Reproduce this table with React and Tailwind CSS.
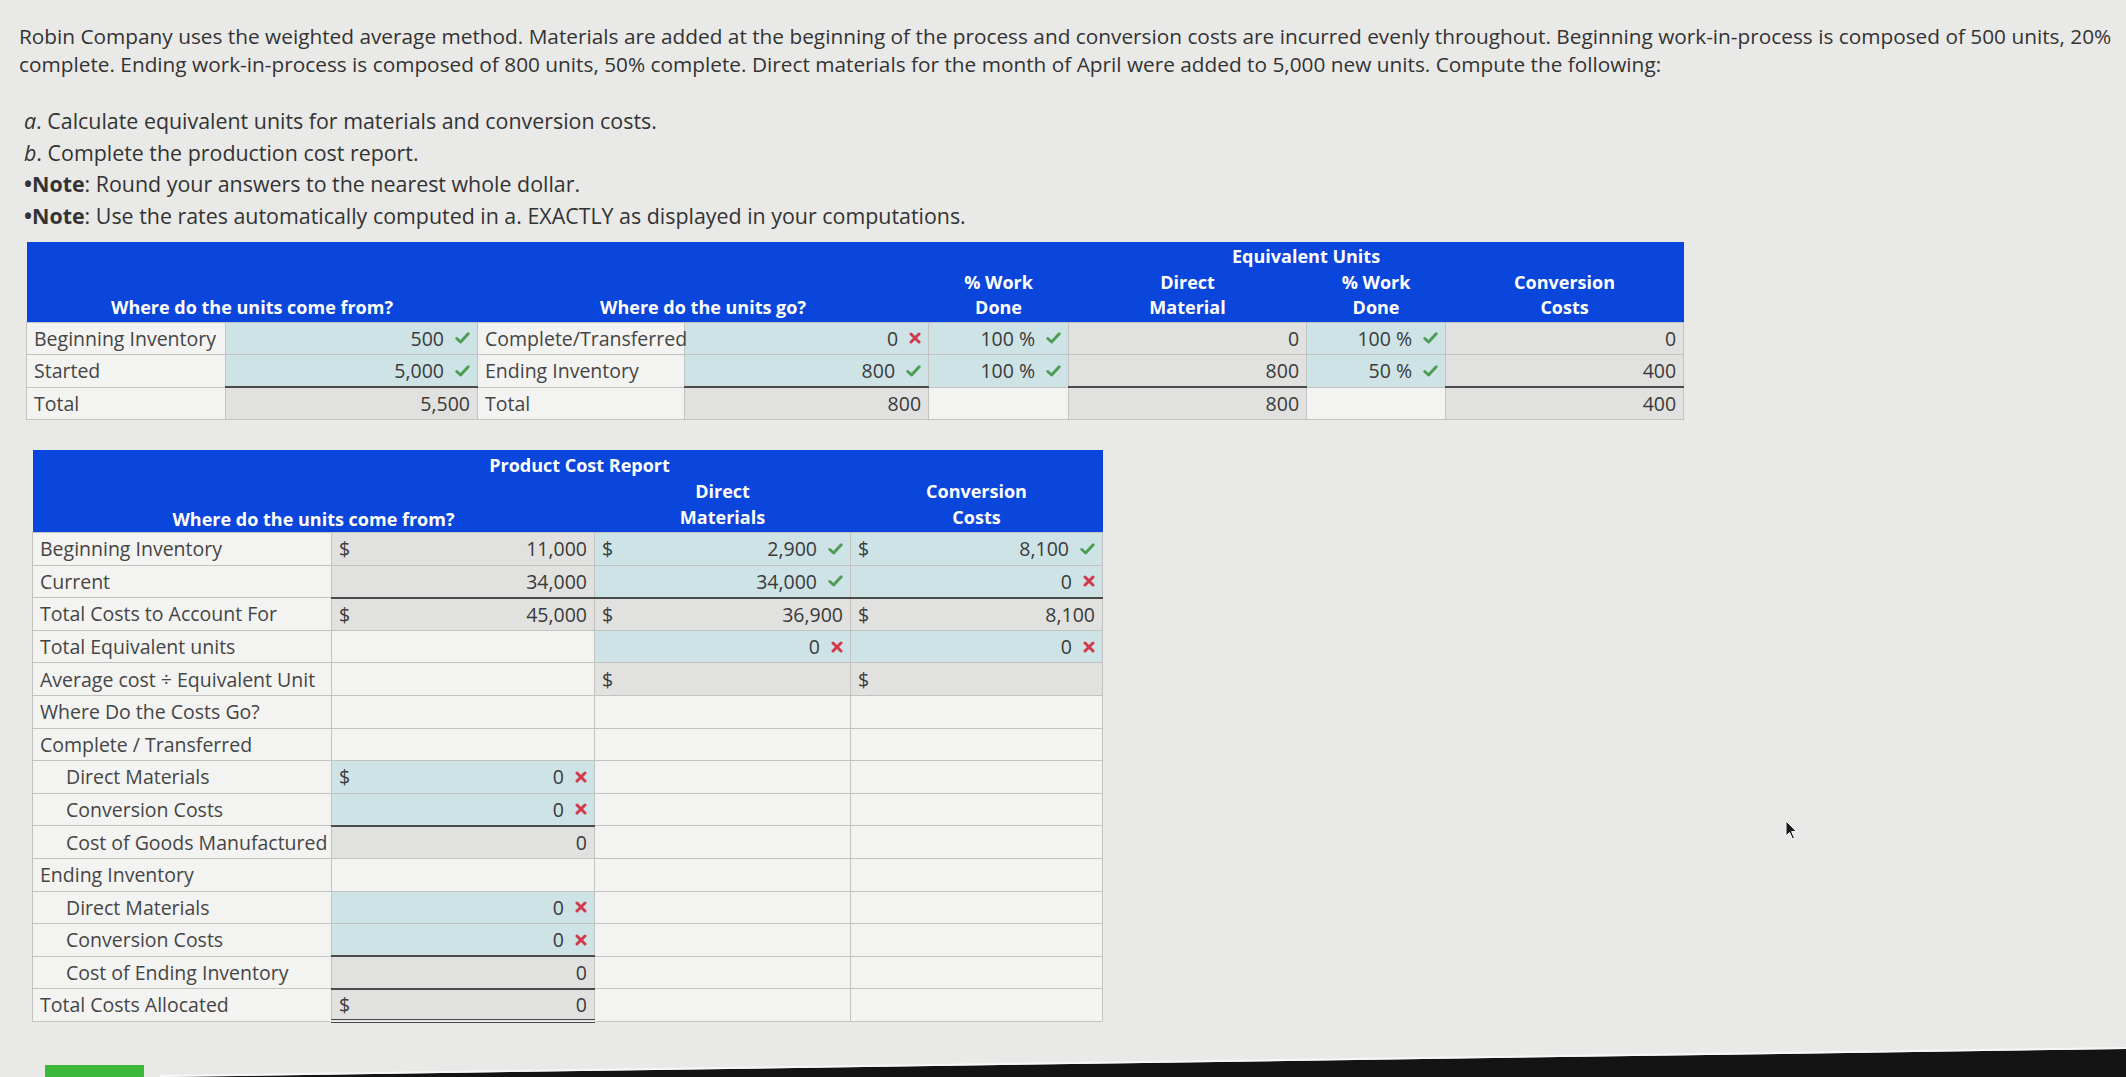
import React from "react";

const BG = {
  teal: "bg-[#cde3e6]",
  gray: "bg-[#e1e1df]",
  white: "bg-[#f3f3f1]",
};

function Check() {
  return (
    <svg width="15" height="12" viewBox="0 0 15 12" className="shrink-0">
      <polyline points="1.8,6.5 5.6,10 13.2,1.8" fill="none" stroke="#4f9d55" strokeWidth="3" strokeLinecap="round" strokeLinejoin="round" />
    </svg>
  );
}

function Cross() {
  return (
    <svg width="12" height="12" viewBox="0 0 12 12" className="shrink-0">
      <line x1="2" y1="2" x2="10" y2="10" stroke="#d23a4c" strokeWidth="3" strokeLinecap="round" />
      <line x1="10" y1="2" x2="2" y2="10" stroke="#d23a4c" strokeWidth="3" strokeLinecap="round" />
    </svg>
  );
}

function Val({ c }) {
  const line = c.line ? "border-b-2 border-b-[#4a4a4a]" : "";
  const dbl = c.dbl ? "border-b-4 border-double border-b-[#4a4a4a]" : "";
  return (
    <td className={`${BG[c.bg || "white"]} border border-[#c2c2c0] ${line} ${dbl} p-0`}>
      <div className="flex items-center justify-between pl-[7px] pr-[7px] text-[#3a3a3a]">
        <span>{c.d ? "$" : ""}</span>
        <span className="flex items-center gap-[11px]">
          <span>{c.v}</span>
          {c.i === "ok" && <Check />}
          {c.i === "x" && <Cross />}
        </span>
      </div>
    </td>
  );
}

function Label({ children, indent }) {
  return (
    <td className={`bg-[#f3f3f1] border border-[#c2c2c0] text-[#454545] whitespace-nowrap ${indent ? "pl-[33px]" : "pl-[7px]"}`}>
      {children}
    </td>
  );
}

const t2rows = [
  { l: "Beginning Inventory", c: [{ bg: "gray", d: true, v: "11,000" }, { bg: "teal", d: true, v: "2,900", i: "ok" }, { bg: "teal", d: true, v: "8,100", i: "ok" }] },
  { l: "Current", c: [{ bg: "gray", v: "34,000", line: true }, { bg: "teal", v: "34,000", i: "ok", line: true }, { bg: "teal", v: "0", i: "x", line: true }] },
  { l: "Total Costs to Account For", c: [{ bg: "gray", d: true, v: "45,000" }, { bg: "gray", d: true, v: "36,900" }, { bg: "gray", d: true, v: "8,100" }] },
  { l: "Total Equivalent units", c: [{ bg: "white" }, { bg: "teal", v: "0", i: "x" }, { bg: "teal", v: "0", i: "x" }] },
  { l: "Average cost ÷ Equivalent Unit", c: [{ bg: "white" }, { bg: "gray", d: true }, { bg: "gray", d: true }] },
  { l: "Where Do the Costs Go?", c: [{}, {}, {}] },
  { l: "Complete / Transferred", c: [{}, {}, {}] },
  { l: "Direct Materials", ind: true, c: [{ bg: "teal", d: true, v: "0", i: "x" }, {}, {}] },
  { l: "Conversion Costs", ind: true, c: [{ bg: "teal", v: "0", i: "x", line: true }, {}, {}] },
  { l: "Cost of Goods Manufactured", ind: true, c: [{ bg: "gray", v: "0" }, {}, {}] },
  { l: "Ending Inventory", c: [{}, {}, {}] },
  { l: "Direct Materials", ind: true, c: [{ bg: "teal", v: "0", i: "x" }, {}, {}] },
  { l: "Conversion Costs", ind: true, c: [{ bg: "teal", v: "0", i: "x", line: true }, {}, {}] },
  { l: "Cost of Ending Inventory", ind: true, c: [{ bg: "gray", v: "0", line: true }, {}, {}] },
  { l: "Total Costs Allocated", c: [{ bg: "gray", d: true, v: "0", dbl: true }, {}, {}] },
];

export default function App() {
  return (
    <div className="relative h-[1077px] w-full overflow-hidden bg-[#e9e9e7] font-['Open_Sans',sans-serif] text-[19.5px] px-[19px] pt-[22px]">
      <div className="text-[#333] text-[20.8px] leading-[28px] whitespace-nowrap">
        <div>Robin Company uses the weighted average method. Materials are added at the beginning of the process and conversion costs are incurred evenly throughout. Beginning work-in-process is composed of 500 units, 20%</div>
        <div>complete. Ending work-in-process is composed of 800 units, 50% complete. Direct materials for the month of April were added to 5,000 new units. Compute the following:</div>
      </div>

      <div className="mt-[27px] pl-[5px] text-[#333] text-[21.4px] leading-[31.5px] whitespace-nowrap">
        <div><i>a</i>. Calculate equivalent units for materials and conversion costs.</div>
        <div><i>b</i>. Complete the production cost report.</div>
        <div><span className="font-bold">•Note</span>: Round your answers to the nearest whole dollar.</div>
        <div><span className="font-bold">•Note</span>: Use the rates automatically computed in a. EXACTLY as displayed in your computations.</div>
      </div>

      {/* Table 1 */}
      <table className="mt-[11px] ml-[7px] table-fixed border-collapse w-[1657px]">
        <colgroup>
          <col className="w-[199px]" />
          <col className="w-[252px]" />
          <col className="w-[207px]" />
          <col className="w-[244px]" />
          <col className="w-[140px]" />
          <col className="w-[238px]" />
          <col className="w-[139px]" />
          <col className="w-[238px]" />
        </colgroup>
        <thead className="bg-[#0a45dc] text-white font-bold text-[18px] leading-[25px]">
          <tr className="h-[27px]">
            <th colSpan={2} rowSpan={3} className="align-bottom pb-[2px] font-bold">Where do the units come from?</th>
            <th colSpan={2} rowSpan={3} className="align-bottom pb-[2px] font-bold">Where do the units go?</th>
            <th colSpan={4} className="align-bottom font-bold">Equivalent Units</th>
          </tr>
          <tr className="h-[26px]">
            <th rowSpan={2} className="align-bottom pb-[2px] font-bold">% Work<br />Done</th>
            <th rowSpan={2} className="align-bottom pb-[2px] font-bold">Direct<br />Material</th>
            <th rowSpan={2} className="align-bottom pb-[2px] font-bold">% Work<br />Done</th>
            <th rowSpan={2} className="align-bottom pb-[2px] font-bold">Conversion<br />Costs</th>
          </tr>
          <tr className="h-[27px]"></tr>
        </thead>
        <tbody>
          <tr className="h-[32.5px]">
            <Label>Beginning Inventory</Label>
            <Val c={{ bg: "teal", v: "500", i: "ok" }} />
            <Label>Complete/Transferred</Label>
            <Val c={{ bg: "teal", v: "0", i: "x" }} />
            <Val c={{ bg: "teal", v: "100 %", i: "ok" }} />
            <Val c={{ bg: "gray", v: "0" }} />
            <Val c={{ bg: "teal", v: "100 %", i: "ok" }} />
            <Val c={{ bg: "gray", v: "0" }} />
          </tr>
          <tr className="h-[32.5px]">
            <Label>Started</Label>
            <Val c={{ bg: "teal", v: "5,000", i: "ok", line: true }} />
            <Label>Ending Inventory</Label>
            <Val c={{ bg: "teal", v: "800", i: "ok", line: true }} />
            <Val c={{ bg: "teal", v: "100 %", i: "ok" }} />
            <Val c={{ bg: "gray", v: "800", line: true }} />
            <Val c={{ bg: "teal", v: "50 %", i: "ok" }} />
            <Val c={{ bg: "gray", v: "400", line: true }} />
          </tr>
          <tr className="h-[32.5px]">
            <Label>Total</Label>
            <Val c={{ bg: "gray", v: "5,500" }} />
            <Label>Total</Label>
            <Val c={{ bg: "gray", v: "800" }} />
            <Val c={{ bg: "white" }} />
            <Val c={{ bg: "gray", v: "800" }} />
            <Val c={{ bg: "white" }} />
            <Val c={{ bg: "gray", v: "400" }} />
          </tr>
        </tbody>
      </table>

      {/* Table 2 */}
      <table className="mt-[30px] ml-[13px] table-fixed border-collapse w-[1070px]">
        <colgroup>
          <col className="w-[299px]" />
          <col className="w-[263px]" />
          <col className="w-[256px]" />
          <col className="w-[252px]" />
        </colgroup>
        <thead className="bg-[#0a45dc] text-white text-[18px] leading-[26px]">
          <tr className="h-[28px]">
            <th colSpan={4} className="align-bottom font-bold pl-[24px]">Product Cost Report</th>
          </tr>
          <tr className="h-[26px]">
            <th colSpan={2} rowSpan={2} className="align-bottom font-bold">Where do the units come from?</th>
            <th rowSpan={2} className="align-bottom pb-[2px] font-bold">Direct<br />Materials</th>
            <th rowSpan={2} className="align-bottom pb-[2px] font-bold">Conversion<br />Costs</th>
          </tr>
          <tr className="h-[26px]"></tr>
        </thead>
        <tbody>
          {t2rows.map((r, idx) => (
            <tr key={idx} className="h-[32.6px]">
              <Label indent={r.ind}>{r.l}</Label>
              {r.c.map((c, j) => (
                <Val key={j} c={c} />
              ))}
            </tr>
          ))}
        </tbody>
      </table>

      <div className="mt-[42px] ml-[26px] w-[99px] h-[30px] bg-[#3cb83a]"></div>

      {/* cursor */}
      <svg className="absolute left-[1784px] top-[820px]" width="16" height="22" viewBox="0 0 16 22">
        <path d="M2 1 L2 16 L5.5 12.5 L8.5 19 L10.5 18 L7.6 11.6 L12.5 11.6 Z" fill="#1a1a1a" stroke="#ffffff" strokeWidth="1" />
      </svg>

      {/* screen bezel at the bottom */}
      <svg className="absolute left-0 bottom-0" width="2126" height="32" viewBox="0 0 2126 32">
        <polygon points="160,32 2126,4 2126,32" fill="#141414" />
        <polygon points="160,30 2126,2 2126,4 160,32" fill="#f7f7f7" />
      </svg>
    </div>
  );
}
